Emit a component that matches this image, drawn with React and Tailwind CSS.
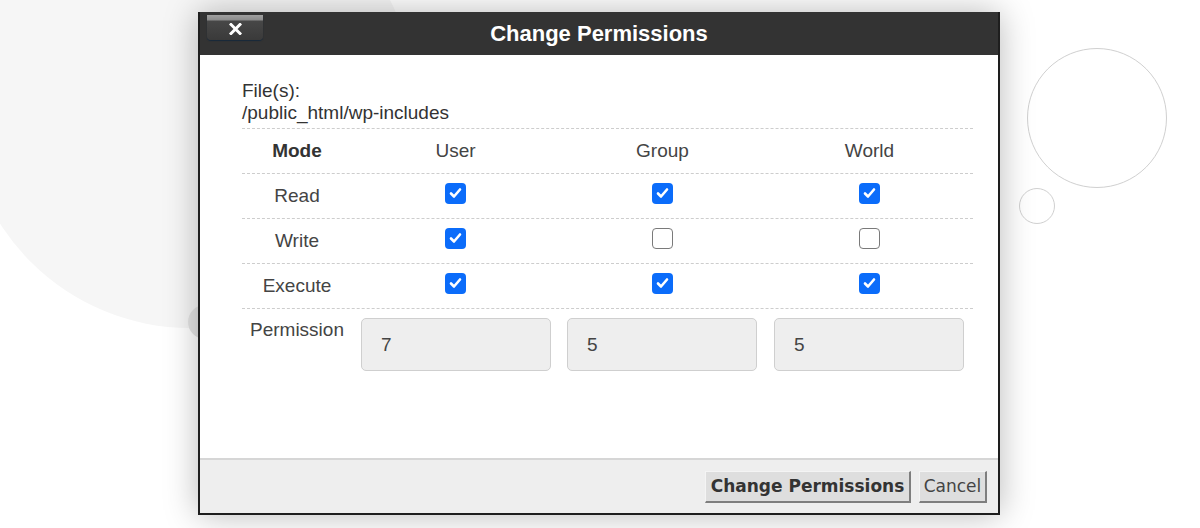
import React from "react";

function Check({ on }) {
  if (on) {
    return (
      <div className="flex h-[21px] w-[21px] items-center justify-center rounded-[4px] bg-[#0b6cfa]">
        <svg width="13" height="12" viewBox="0 0 13 12">
          <path d="M2 6.5 L5 9.5 L11 2.5" fill="none" stroke="#fff" strokeWidth="2.6" strokeLinecap="round" strokeLinejoin="round" />
        </svg>
      </div>
    );
  }
  return <div className="h-[21px] w-[21px] rounded-[4px] border-[1.5px] border-[#7a7a7a] bg-white" />;
}

const rows = [
  { label: "Read", v: [true, true, true] },
  { label: "Write", v: [true, false, false] },
  { label: "Execute", v: [true, true, true] },
];

export default function App() {
  return (
    <div
      className="relative h-[528px] w-[1200px] overflow-hidden bg-white text-[#333]"
      style={{ fontFamily: '"Liberation Sans", Arial, sans-serif' }}
    >
      {/* background decorations */}
      <div className="absolute left-[-35px] top-[-122px] h-[450px] w-[450px] rounded-full bg-[#f6f6f6]" />
      <div className="absolute left-[188px] top-[305px] h-[34px] w-[34px] rounded-full bg-[#e4e4e4]" />
      <div className="absolute left-[1027px] top-[48px] h-[140px] w-[140px] rounded-full border border-[#d0d0d0]" />
      <div className="absolute left-[1019px] top-[188px] h-[36px] w-[36px] rounded-full border border-[#d0d0d0]" />

      <div className="relative pl-[198px] pt-[12px]">
        <div className="flex h-[503px] w-[802px] flex-col border-2 border-t-0 border-[#1e1e1e] bg-white shadow-[0_0_32px_rgba(0,0,0,0.28)]">
          {/* header */}
          <div className="grid h-[43px] shrink-0 grid-cols-[1fr_auto_1fr] bg-[#333]">
            <div className="pl-[7px] pt-[3px]">
              <div className="flex h-[25px] w-[56px] items-center justify-center rounded-b-[4px] bg-[linear-gradient(to_bottom,#a0a0a0_0px,#8c8c8c_5px,#474747_6px,#3a3a3a_100%)] pt-[2px] shadow-[0_1px_1px_rgba(20,40,60,0.9)]">
                <svg width="13" height="12" viewBox="0 0 13 12">
                  <path d="M2 1.5 L11 10.5 M11 1.5 L2 10.5" stroke="#fff" strokeWidth="3" strokeLinecap="square" />
                </svg>
              </div>
            </div>
            <div className="flex items-center text-[22px] font-bold text-white">Change Permissions</div>
            <div />
          </div>

          {/* body */}
          <div className="flex-1 bg-white pl-[42px] pr-[24px] pt-[25px] text-[19px] leading-[22px]">
            <div>File(s):</div>
            <div>/public_html/wp-includes</div>
            <div className="mt-[4px] grid w-[731px] grid-cols-[110px_207px_207px_207px]">
              <div className="col-span-4 grid h-[45px] grid-cols-[110px_207px_207px_207px] items-center border-t border-dashed border-[#cdcdcd] pb-[1px] text-center">
                <div className="font-bold">Mode</div>
                <div className="text-[#444]">User</div>
                <div className="text-[#444]">Group</div>
                <div className="text-[#444]">World</div>
              </div>
              {rows.map((r) => (
                <div
                  key={r.label}
                  className="col-span-4 grid h-[45px] grid-cols-[110px_207px_207px_207px] items-center border-t border-dashed border-[#cdcdcd] text-center"
                >
                  <div className="pb-[1px] text-[#444]">{r.label}</div>
                  {r.v.map((on, i) => (
                    <div key={i} className="flex justify-center pb-[6px]">
                      <Check on={on} />
                    </div>
                  ))}
                </div>
              ))}
              <div className="col-span-4 grid grid-cols-[110px_207px_207px_207px] border-t border-dashed border-[#cdcdcd]">
                <div className="pt-[10px] text-center text-[#444]">Permission</div>
                {["7", "5", "5"].map((n, i) => (
                  <div key={i} className={i === 0 ? "pl-[9px] pt-[9px]" : "pl-[8px] pt-[9px]"}>
                    <div className="flex h-[53px] w-[190px] items-center rounded-[5px] border border-[#cfcfcf] bg-[#eeeeee] pl-[19px] text-[19px] text-[#444]">
                      {n}
                    </div>
                  </div>
                ))}
              </div>
            </div>
          </div>

          {/* footer */}
          <div
            className="flex h-[55px] shrink-0 items-center justify-end gap-[8px] border-t-2 border-[#d6d6d6] bg-[#eeeeee] pr-[11px] text-[17px]"
            style={{ fontFamily: '"DejaVu Sans", Verdana, sans-serif' }}
          >
            <button className="flex h-[32px] w-[206px] items-center justify-center border-b-2 border-l border-r-2 border-t border-b-[#7e7e7e] border-l-[#f4f4f4] border-r-[#7e7e7e] border-t-[#f4f4f4] bg-[#dedede] pt-[2px] font-bold text-[#333]">
              Change Permissions
            </button>
            <button className="flex h-[32px] w-[68px] items-center justify-center border-b-2 border-l border-r-2 border-t border-b-[#7e7e7e] border-l-[#f4f4f4] border-r-[#7e7e7e] border-t-[#f4f4f4] bg-[#dedede] pt-[2px] text-[#444]">
              Cancel
            </button>
          </div>
        </div>
      </div>
    </div>
  );
}
